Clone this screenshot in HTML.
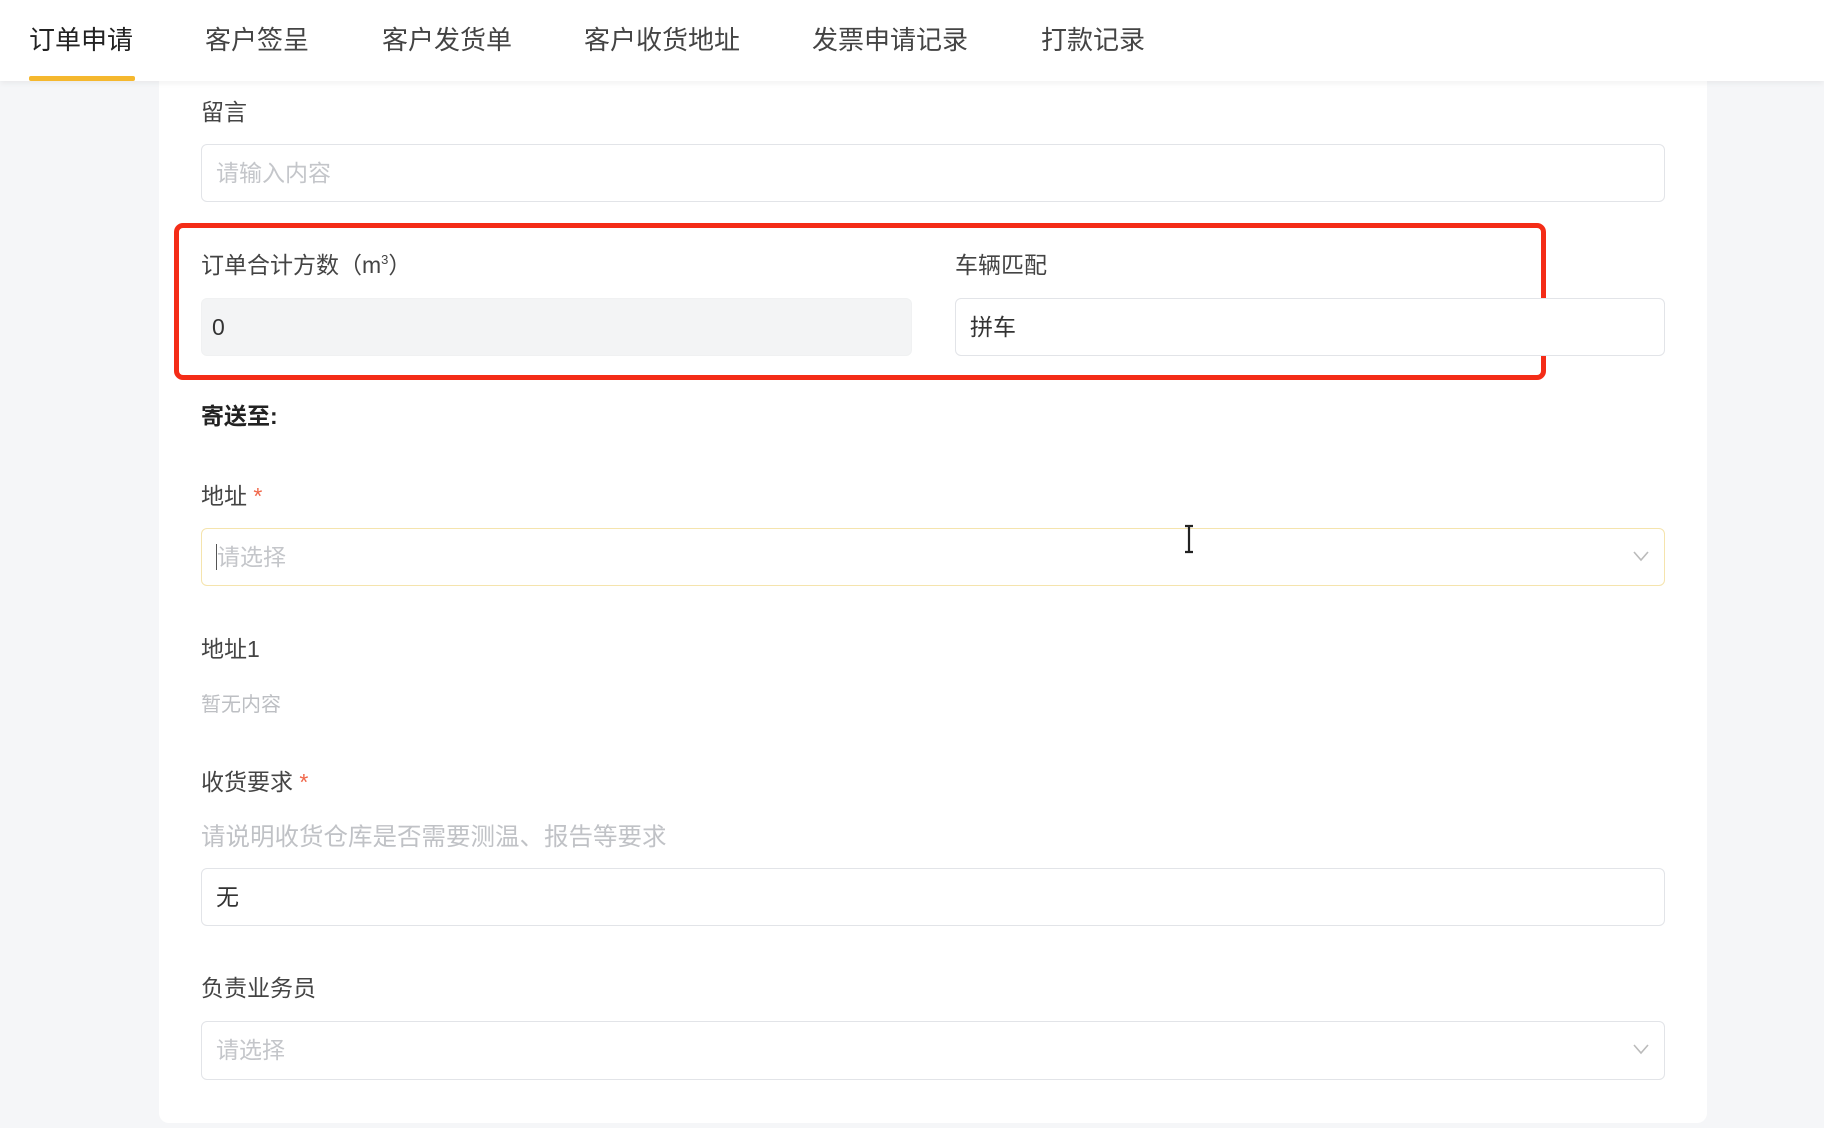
<!DOCTYPE html>
<html><head><meta charset="utf-8"><style>
*{margin:0;padding:0;box-sizing:border-box}
body{width:1824px;height:1128px;background:#f5f6f8;font-family:"Liberation Sans","Noto Sans CJK SC",sans-serif;position:relative;overflow:hidden;color:#333}
.hdr{position:absolute;left:0;top:0;width:1824px;height:81px;background:#fff;box-shadow:0 2px 6px rgba(0,0,0,.06);z-index:2}
.tab{position:absolute;top:22px;font-size:26px;color:#444;line-height:36px;white-space:nowrap}
.ul{position:absolute;left:29px;top:76px;width:106px;height:5px;background:#f5b82e;border-radius:2px}
.card{position:absolute;left:159px;top:70px;width:1548px;height:1053px;background:#fff;border-radius:10px}
.a{position:absolute;white-space:nowrap}
.lbl{font-size:23px;color:#444;line-height:30px}
.inp{position:absolute;border:1px solid #e2e4e8;border-radius:6px;background:#fff;font-size:23px;line-height:56px;padding-left:14px}
.ph{color:#c4c6ca}
.star{color:#f0674a}
.chev{position:absolute;right:14px;top:20px}
sup{font-size:13px;line-height:0;vertical-align:9px}
</style></head><body>
<div class="hdr">
<div class="tab" style="left:29px;color:#222">订单申请</div>
<div class="tab" style="left:205px">客户签呈</div>
<div class="tab" style="left:382px">客户发货单</div>
<div class="tab" style="left:584px">客户收货地址</div>
<div class="tab" style="left:812px">发票申请记录</div>
<div class="tab" style="left:1041px">打款记录</div>
<div class="ul"></div>
</div>
<div class="card"></div>
<div class="a lbl" style="left:201px;top:97px">留言</div>
<div class="inp ph" style="left:201px;top:144px;width:1464px;height:58px">请输入内容</div>
<div class="a" style="left:174px;top:223px;width:1372px;height:157px;border:5px solid #f42c17;border-radius:9px"></div>
<div class="a lbl" style="left:201px;top:250px">订单合计方数（m<sup>3</sup>）</div>
<div class="a lbl" style="left:955px;top:250px">车辆匹配</div>
<div class="inp" style="left:201px;top:298px;width:711px;height:58px;background:#f3f4f5;border-color:#f0f1f2;padding-left:10px">0</div>
<div class="inp" style="left:955px;top:298px;width:710px;height:58px;color:#333">拼车</div>
<div class="a lbl" style="left:201px;top:401px;font-weight:bold;color:#222">寄送至:</div>
<div class="a lbl" style="left:201px;top:481px">地址 <span class="star">*</span></div>
<div class="inp ph" style="left:201px;top:528px;width:1464px;height:58px;border-color:#f5e4ad"><span style="border-left:1px solid #555"></span>请选择
<svg class="chev" width="18" height="14" viewBox="0 0 18 14"><path d="M2 3l7 8 7-8" fill="none" stroke="#bbb" stroke-width="1.6"/></svg></div>
<svg class="a" style="left:1183px;top:524px" width="12" height="30" viewBox="0 0 12 30"><path d="M2 2h8M6 2v26M2 28h8" stroke="#222" stroke-width="2.2" fill="none"/></svg>
<div class="a lbl" style="left:201px;top:634px">地址1</div>
<div class="a" style="left:201px;top:688px;font-size:20px;color:#bdbfc3">暂无内容</div>
<div class="a lbl" style="left:201px;top:767px">收货要求 <span class="star">*</span></div>
<div class="a" style="left:201px;top:818px;font-size:24.5px;color:#c0c2c6">请说明收货仓库是否需要测温、报告等要求</div>
<div class="inp" style="left:201px;top:868px;width:1464px;height:58px;color:#333">无</div>
<div class="a lbl" style="left:201px;top:973px">负责业务员</div>
<div class="inp ph" style="left:201px;top:1021px;width:1464px;height:59px">请选择
<svg class="chev" width="18" height="14" viewBox="0 0 18 14"><path d="M2 3l7 8 7-8" fill="none" stroke="#bbb" stroke-width="1.6"/></svg></div>
</body></html>
